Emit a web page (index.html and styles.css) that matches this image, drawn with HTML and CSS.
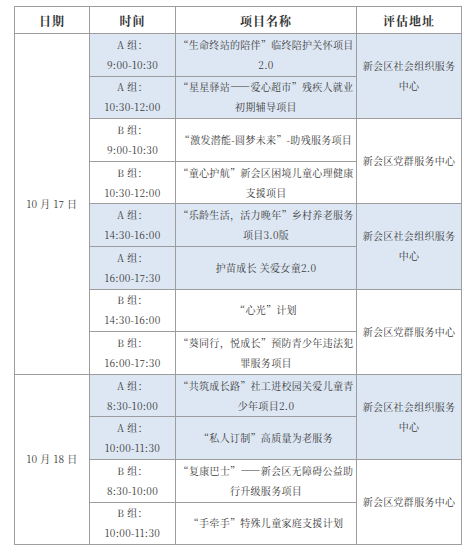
FILE: index.html
```html
<!DOCTYPE html>
<html lang="zh-CN">
<head>
<meta charset="utf-8">
<link rel="stylesheet" href="styles.css">
</head>
<body>
<table class="sched">
  <colgroup>
    <col class="c-date"><col class="c-time"><col class="c-proj"><col class="c-addr">
  </colgroup>
  <thead>
    <tr class="head">
      <th>日期</th><th>时间</th><th>项目名称</th><th>评估地址</th>
    </tr>
  </thead>
  <tbody>
    <tr class="blue">
      <td class="date" rowspan="8">10 月 17 日</td>
      <td>A 组：<br>9:00-10:30</td>
      <td>“生命终站的陪伴”临终陪护关怀项目<br>2.0</td>
      <td class="addr" rowspan="2">新会区社会组织服务<br>中心</td>
    </tr>
    <tr class="blue">
      <td>A 组：<br>10:30-12:00</td>
      <td>“星星驿站——爱心超市”残疾人就业<br>初期辅导项目</td>
    </tr>
    <tr>
      <td>B 组：<br>9:00-10:30</td>
      <td>“激发潜能-圆梦未来”-助残服务项目</td>
      <td class="addr white" rowspan="2">新会区党群服务中心</td>
    </tr>
    <tr>
      <td>B 组：<br>10:30-12:00</td>
      <td>“童心护航”新会区困境儿童心理健康<br>支援项目</td>
    </tr>
    <tr class="blue">
      <td>A 组：<br>14:30-16:00</td>
      <td>“乐龄生活，活力晚年”乡村养老服务<br>项目3.0版</td>
      <td class="addr" rowspan="2">新会区社会组织服务<br>中心</td>
    </tr>
    <tr class="blue">
      <td>A 组：<br>16:00-17:30</td>
      <td>护苗成长 关爱女童2.0</td>
    </tr>
    <tr>
      <td>B 组：<br>14:30-16:00</td>
      <td>“心光”计划</td>
      <td class="addr white" rowspan="2">新会区党群服务中心</td>
    </tr>
    <tr>
      <td>B 组：<br>16:00-17:30</td>
      <td>“葵同行，悦成长”预防青少年违法犯<br>罪服务项目</td>
    </tr>
    <tr class="blue">
      <td class="date" rowspan="4">10 月 18 日</td>
      <td>A 组：<br>8:30-10:00</td>
      <td>“共筑成长路”社工进校园关爱儿童青<br>少年项目2.0</td>
      <td class="addr" rowspan="2">新会区社会组织服务<br>中心</td>
    </tr>
    <tr class="blue">
      <td>A 组：<br>10:00-11:30</td>
      <td>“私人订制”高质量为老服务</td>
    </tr>
    <tr>
      <td>B 组：<br>8:30-10:00</td>
      <td>“复康巴士”——新会区无障碍公益助<br>行升级服务项目</td>
      <td class="addr white" rowspan="2">新会区党群服务中心</td>
    </tr>
    <tr>
      <td>B 组：<br>10:00-11:30</td>
      <td>“手牵手”特殊儿童家庭支援计划</td>
    </tr>
  </tbody>
</table>
</body>
</html>
```

FILE: styles.css
```css
html, body {
  margin: 0;
  padding: 0;
  background: #ffffff;
}

body {
  font-family: "Noto Serif CJK SC", "Noto Sans CJK SC", serif;
  color: #3a3a3a;
}

.sched {
  margin: 6px 0 0 14px;
  width: 447px;
  border-collapse: collapse;
  table-layout: fixed;
}

.c-date { width: 75px; }
.c-time { width: 86px; }
.c-proj { width: 181px; }
.c-addr { width: 105px; }

.sched th,
.sched td {
  border: 1px solid #9d9d9d;
  padding: 0 2px;
  text-align: center;
  vertical-align: middle;
}

.head th {
  height: 26px;
  font-size: 12px;
  font-weight: bold;
  letter-spacing: 1px;
  color: #333333;
}

.sched tbody tr {
  height: 42.6px;
}

.sched td {
  font-size: 10px;
  line-height: 20px;
  letter-spacing: 0.3px;
}

.blue td {
  background: #dde7f3;
}

.blue td.date,
.sched td.date {
  background: #ffffff;
}

.sched td.white {
  background: #ffffff;
}
```
